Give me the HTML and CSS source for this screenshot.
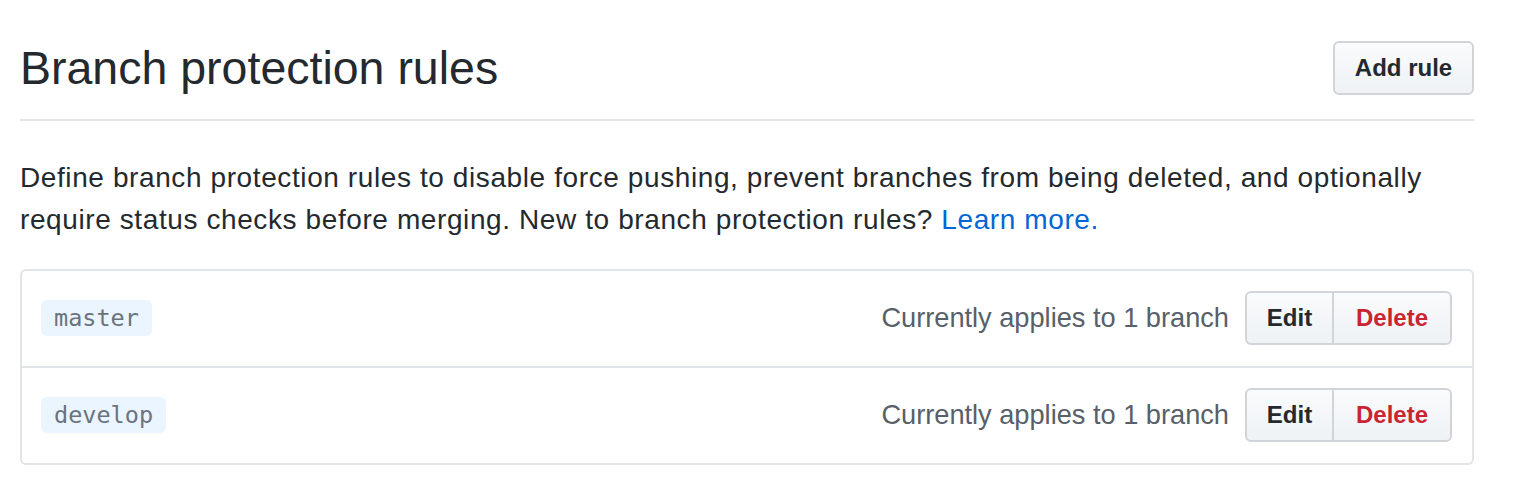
FILE: index.html
```html
<!DOCTYPE html>
<html lang="en">
<head>
<meta charset="utf-8">
<title>Branch protection rules</title>
<link rel="stylesheet" href="styles.css">
</head>
<body>
<div class="page">
  <div class="subhead">
    <h2 class="subhead-heading">Branch protection rules</h2>
    <button class="btn btn-add" type="button">Add rule</button>
  </div>
  <p class="intro">Define branch protection rules to disable force pushing, prevent branches from being deleted, and optionally require status checks before merging. New to branch protection rules? <a class="link" href="#">Learn more.</a></p>
  <div class="rules">
    <div class="rule-row">
      <code class="branch-name">master</code>
      <div class="rule-actions">
        <span class="rule-note">Currently applies to 1 branch</span>
        <div class="btn-group">
          <button class="btn btn-group-item" type="button">Edit</button>
          <button class="btn btn-group-item btn-danger" type="button">Delete</button>
        </div>
      </div>
    </div>
    <div class="rule-row">
      <code class="branch-name">develop</code>
      <div class="rule-actions">
        <span class="rule-note">Currently applies to 1 branch</span>
        <div class="btn-group">
          <button class="btn btn-group-item" type="button">Edit</button>
          <button class="btn btn-group-item btn-danger" type="button">Delete</button>
        </div>
      </div>
    </div>
  </div>
</div>
</body>
</html>
```
FILE: styles.css
```css
* { box-sizing: border-box; }

html, body {
  margin: 0;
  padding: 0;
  background: #ffffff;
}

body {
  font-family: "Liberation Sans", Arial, sans-serif;
  color: #24292e;
}

.page {
  width: 1454px;
  margin-left: 20px;
}

.subhead {
  display: flex;
  align-items: center;
  justify-content: space-between;
  padding: 41px 0 24px;
  border-bottom: 2px solid #e1e4e8;
}

.subhead-heading {
  margin: 0;
  font-size: 46.5px;
  font-weight: 400;
  line-height: 54px;
  color: #24292e;
}

.btn {
  display: inline-flex;
  align-items: center;
  justify-content: center;
  height: 54px;
  padding: 0 22px;
  font-family: "Liberation Sans", Arial, sans-serif;
  font-size: 24px;
  font-weight: 700;
  white-space: nowrap;
  color: #24292e;
  background: linear-gradient(180deg, #fafbfc 0%, #eff3f6 90%);
  border: 2px solid #d1d5da;
  border-radius: 6px;
  cursor: pointer;
}

.btn-add {
  width: 141px;
}

.intro {
  margin: 36px 0 28px;
  max-width: 1420px;
  font-size: 28px;
  line-height: 42px;
  letter-spacing: 0.6px;
  color: #24292e;
}

.link {
  color: #0366d6;
  text-decoration: none;
}

.rules {
  border: 2px solid #e1e4e8;
  border-radius: 6px;
}

.rule-row {
  display: flex;
  align-items: center;
  justify-content: space-between;
  padding: 20px 20px 21px 19px;
}

.rule-row + .rule-row {
  border-top: 2px solid #e1e4e8;
}

.branch-name {
  display: inline-flex;
  align-items: center;
  height: 36px;
  padding: 0 13px;
  font-family: "DejaVu Sans Mono", "Liberation Mono", monospace;
  font-size: 23.5px;
  color: #6a737d;
  background: #eaf5ff;
  border-radius: 6px;
}

.rule-actions {
  display: flex;
  align-items: center;
  gap: 16px;
}

.rule-note {
  font-size: 27.2px;
  color: #586069;
}

.btn-group {
  display: flex;
}

.btn-group-item {
  border-radius: 0;
}

.btn-group-item:first-child {
  width: 89px;
  border-radius: 6px 0 0 6px;
}

.btn-group-item + .btn-group-item {
  width: 120px;
  margin-left: -2px;
  border-radius: 0 6px 6px 0;
}

.btn-danger {
  color: #cb2431;
}
```
